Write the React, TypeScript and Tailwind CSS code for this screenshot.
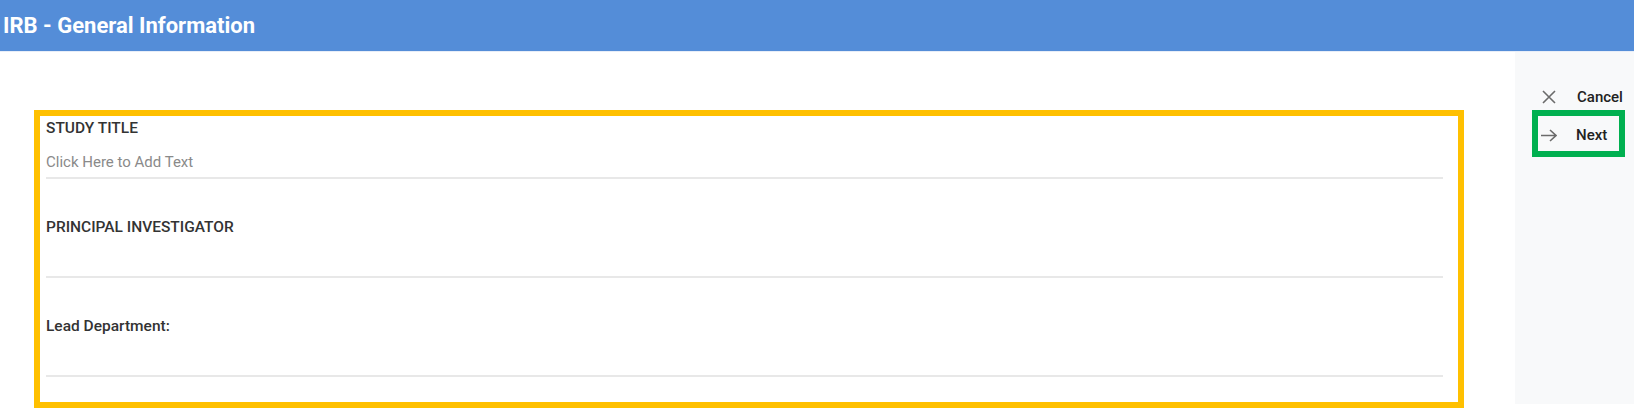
import React from "react";

const fields = [
  { label: "STUDY TITLE", placeholder: "Click Here to Add Text" },
  { label: "PRINCIPAL INVESTIGATOR", placeholder: "" },
  { label: "Lead Department:", placeholder: "" },
];

function CloseIcon() {
  return (
    <svg width="14" height="14" viewBox="0 0 14 14" fill="none" stroke="#6b6b6b" strokeWidth="1.6">
      <path d="M1 1L13 13M13 1L1 13" />
    </svg>
  );
}

function ArrowIcon() {
  return (
    <svg width="16" height="13" viewBox="0 0 16 13" fill="none" stroke="#6b6b6b" strokeWidth="1.6">
      <path d="M0 6.5H15M9 1L15 6.5L9 12" />
    </svg>
  );
}

export default function App() {
  return (
    <div className="w-full bg-white font-['Roboto',_'Liberation_Sans',_sans-serif]">
      {/* Header */}
      <div className="h-[51px] bg-[#548dd8] flex items-center pl-[3px]">
        <h1 className="text-[22px] font-bold text-white leading-none">IRB - General Information</h1>
      </div>
      <div className="h-[1px] bg-[#e8eef8]" />

      <div className="flex">
        {/* Main form */}
        <div className="flex-1 pl-[34px] pt-[58px]">
          <div className="w-[1430px] border-[6px] border-[#ffc000] pl-[6px] pr-[15px] pt-[2px] pb-[25px] flex flex-col gap-[38px]">
            {fields.map((f) => (
              <div key={f.label} className="flex flex-col">
                <label className="text-[15.5px] leading-[20px] font-medium text-[#333]">{f.label}</label>
                <div className="h-[41px] pt-[12px] border-b-2 border-[#e8e8e8]">
                  {f.placeholder && (
                    <span className="text-[15px] leading-[20px] text-[#8a8a8a]">{f.placeholder}</span>
                  )}
                </div>
              </div>
            ))}
          </div>
        </div>

        {/* Side actions */}
        <aside className="w-[119px] h-[352px] bg-[#f8f9fa] pt-[26px] flex flex-col">
          <button className="h-[38px] flex items-center pl-[27px] gap-[21px] text-[15px] font-medium text-[#222]">
            <CloseIcon />
            <span>Cancel</span>
          </button>
          <button className="relative h-[38px] flex items-center pl-[26px] gap-[19px] text-[15px] font-medium text-[#222]">
            <ArrowIcon />
            <span>Next</span>
            <span className="absolute left-[17px] top-[-6px] w-[93px] h-[47px] border-[6px] border-[#00b050] pointer-events-none" />
          </button>
        </aside>
      </div>
    </div>
  );
}
